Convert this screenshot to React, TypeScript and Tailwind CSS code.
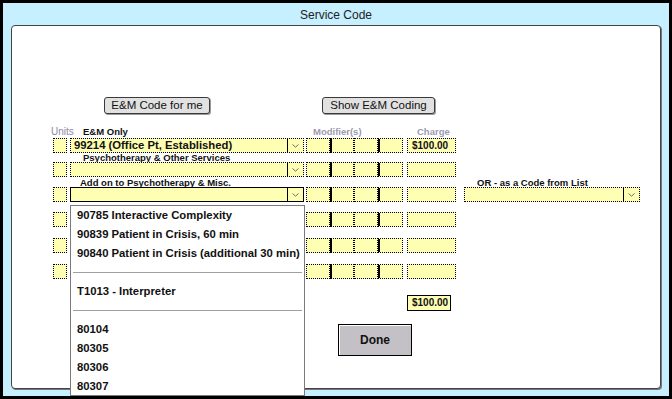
import React from "react";

// Service Code dialog — add-on dropdown open on row 3

const YELLOW = "bg-[#ffffb4]";

const LIST_ITEMS: (string | null)[] = [
  "90785 Interactive Complexity",
  "90839 Patient in Crisis, 60 min",
  "90840 Patient in Crisis (additional 30 min)",
  null,
  "T1013 - Interpreter",
  null,
  "80104",
  "80305",
  "80306",
  "80307",
];

interface RowDef {
  spacer: string;
  label?: string;
  labelPad?: string;
  value?: string;
  charge?: string;
  focused?: boolean;
  withOr?: boolean;
  open?: boolean;
}

const ROWS: RowDef[] = [
  { spacer: "h-0", value: "99214 (Office Pt, Established)", charge: "$100.00" },
  { spacer: "h-[9px]", label: "Psychotherapy & Other Services", labelPad: "pl-[13px]" },
  { spacer: "h-[10px]", label: "Add on to Psychotherapy & Misc.", labelPad: "pl-[10px]", focused: true, withOr: true, open: true },
  { spacer: "h-[10px]" },
  { spacer: "h-[11px]" },
  { spacer: "h-[11px]" },
];

function Chevron() {
  return (
    <svg width="7" height="4" viewBox="0 0 7 4" fill="none">
      <path d="M0.5 0.5L3.5 3.2L6.5 0.5" stroke="#6b6b6b" strokeWidth="1" />
    </svg>
  );
}

function Select({ width, value, focused }: { width: string; value?: string; focused?: boolean }) {
  return (
    <div
      className={`${width} h-[15px] ${YELLOW} flex border border-black ${focused ? "border-solid" : "border-dotted"}`}
    >
      <div className="flex-1 pl-[3px] text-[11.3px] font-bold leading-[13px] text-[#111] whitespace-nowrap overflow-hidden">
        {value}
      </div>
      <div className="w-[16px] border-l border-black flex items-center justify-center">
        <Chevron />
      </div>
    </div>
  );
}

function DropList() {
  return (
    <div className="absolute left-0 top-[18px] z-10 w-[235px] h-[191px] overflow-hidden bg-white border border-[#7a7a7a]">
      {LIST_ITEMS.map((item, i) =>
        item ? (
          <div
            key={i}
            className="h-[19px] pl-[6px] flex items-center text-[11.3px] font-bold text-[#111] whitespace-nowrap"
          >
            {item}
          </div>
        ) : (
          <div key={i} className="h-[19px] flex items-center px-[2px]">
            <div className="h-px w-full bg-[#a0a0a0]" />
          </div>
        )
      )}
    </div>
  );
}

function Modifiers() {
  const box = `h-[15px] ${YELLOW} border border-dotted border-black`;
  return (
    <div className="flex">
      <div className={`${box} w-[24px]`} />
      <div className={`${box} w-[24px] border-l-2 [border-left-style:solid]`} />
      <div className={`${box} w-[24px]`} />
      <div className={`${box} w-[25px] border-l-2 [border-left-style:solid]`} />
    </div>
  );
}

function Row({ row }: { row: RowDef }) {
  return (
    <div className="flex flex-col">
      <div className={`${row.spacer} flex text-[9.5px] font-bold leading-[9px] text-[#111] whitespace-nowrap`}>
        <div className="w-[58px]" />
        <div className={`w-[236px] ${row.labelPad ?? ""} flex items-center`}>{row.label}</div>
        <div className="w-[101px]" />
        <div className="w-[57px]" />
        {row.withOr && <div className="pl-[13px] flex items-center">OR - as a Code from List</div>}
      </div>
      <div className="flex h-[15px]">
        <div className="w-[58px] pl-[41px]">
          <div className={`w-[14px] h-[15px] ${YELLOW} border border-dotted border-black`} />
        </div>
        <div className="w-[236px] relative">
          <Select width="w-[234px]" value={row.value} focused={row.focused} />
          {row.open && <DropList />}
        </div>
        <div className="w-[101px]">
          <Modifiers />
        </div>
        <div className="w-[57px]">
          <div
            className={`w-[49px] h-[15px] ${YELLOW} border border-dotted border-black pl-[4px] text-[10px] font-bold leading-[13px] text-[#111]`}
          >
            {row.charge}
          </div>
        </div>
        {row.withOr && <Select width="w-[176px]" />}
      </div>
    </div>
  );
}

function PushButton({ children, width }: { children: React.ReactNode; width: string }) {
  return (
    <div
      className={`${width} h-[17px] bg-[#e1e1e1] border border-[#3a3a3a] rounded-[3px] shadow-[1px_1px_0_#9a9a9a] flex items-center justify-center text-[11.5px] text-[#111] leading-none`}
    >
      {children}
    </div>
  );
}

export default function App() {
  return (
    <div className="w-[672px] h-[399px] bg-black pt-[3px] pl-[3px] pr-[3px] pb-[3px] font-['Liberation_Sans',Arial,sans-serif] overflow-hidden">
      <div className="h-full bg-[#c6efff] flex flex-col pl-[8px] pr-[8px] pb-[7px]">
        <div className="h-[22px] flex items-center justify-center text-[12px] text-[#222] pt-[2px]">
          Service Code
        </div>
        <div className="flex-1 bg-white border border-[#444] rounded-[4px] shadow-[1px_1px_0_#777] flex flex-col">
          {/* Top buttons */}
          <div className="flex mt-[71px] pl-[92px] gap-[112px]">
            <PushButton width="w-[106px]">E&amp;M Code for me</PushButton>
            <PushButton width="w-[113px]">Show E&amp;M Coding</PushButton>
          </div>

          {/* Column headings */}
          <div className="flex mt-[12px] h-[12px] items-center text-[9.5px] leading-none whitespace-nowrap">
            <div className="w-[58px] pl-[39px] text-[10px] text-[#8a8aa0]">Units</div>
            <div className="w-[236px] pl-[13px] font-bold text-[#111]">E&amp;M Only</div>
            <div className="w-[101px] pl-[7px] font-bold text-[#9b9bb0]">Modifier(s)</div>
            <div className="w-[57px] pl-[10px] font-bold text-[#9b9bb0]">Charge</div>
          </div>

          {/* Code rows */}
          {ROWS.map((row, i) => (
            <Row key={i} row={row} />
          ))}

          {/* Total */}
          <div className="flex mt-[16px] pl-[395px]">
            <div className={`w-[44px] h-[16px] ${YELLOW} border border-black pl-[4px] text-[10px] font-bold leading-[14px] text-[#111]`}>
              $100.00
            </div>
          </div>

          {/* Done */}
          <div className="flex mt-[13px] pl-[326px]">
            <div className="w-[74px] h-[32px] bg-[#c3c1c5] border border-black shadow-[inset_1px_1px_0_#ffffff] flex items-center justify-center text-[12px] font-bold text-[#111]">
              Done
            </div>
          </div>
        </div>
      </div>
    </div>
  );
}
